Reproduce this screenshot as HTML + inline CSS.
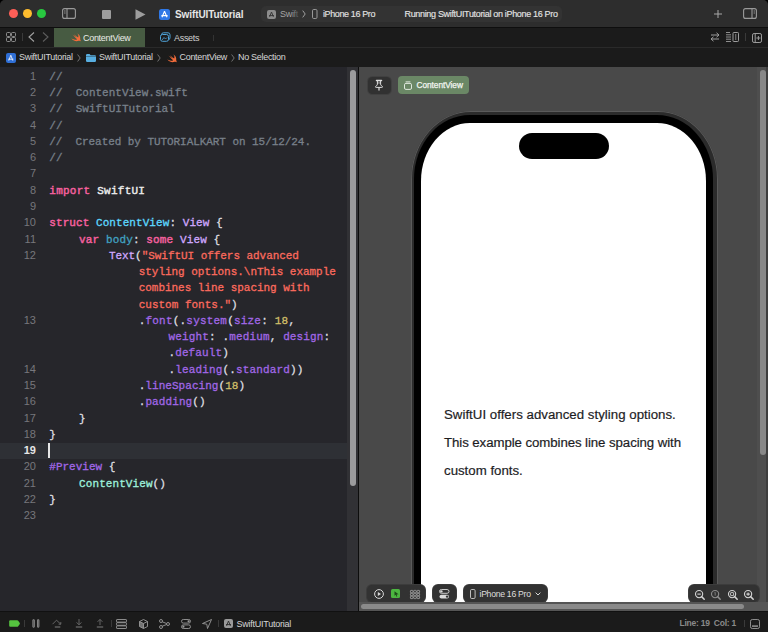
<!DOCTYPE html>
<html><head><meta charset="utf-8">
<style>
*{margin:0;padding:0;box-sizing:border-box}
html,body{width:768px;height:632px;overflow:hidden;background:#000}
body{position:relative;font-family:"Liberation Sans",sans-serif;}
.a{position:absolute}
svg{position:absolute;overflow:visible}
#win{position:absolute;left:0;top:0;width:768px;height:632px;background:#1c1c1c;border-radius:5px 5px 0 0;overflow:hidden}
#title{left:0;top:0;width:768px;height:28px;background:#2d2d2d;border-bottom:1px solid #0e0e0e}
#tabs{left:0;top:28px;width:768px;height:19px;background:#1b1b1b}
#crumb{left:0;top:47px;width:768px;height:19.5px;background:#1b1b1b;border-top:1px solid #2a2a2a}
#editor{left:0;top:66.5px;width:347px;height:544px;background:#26262b;overflow:hidden}
#etrack{left:347px;top:66.5px;width:11px;height:544.5px;background:#313135}
#ethumb{left:350px;top:69.5px;width:6px;height:416px;background:#9b9b9d;border-radius:3px}
#divider{left:358px;top:67px;width:1px;height:544px;background:#0d0d0d}
#canvas{left:359px;top:67px;width:409px;height:544px;background:#494949;overflow:hidden}
#status{left:0;top:611px;width:768px;height:21px;background:#1b1b1b;border-top:1px solid #111}
.t{white-space:pre;color:#d9d9d9;font-size:9px;letter-spacing:-0.3px;line-height:12px}
.code{position:absolute;left:0;white-space:pre;font-family:"Liberation Mono",monospace;font-size:11px;line-height:16.28px;color:#dfdfe0;height:16.28px;-webkit-text-stroke-width:0.3px}
.ln{position:absolute;left:0;width:36px;text-align:right;font-family:"Liberation Sans",sans-serif;font-size:11px;line-height:16.28px;color:#77777c}
.c{color:#78808a}.k{color:#f5609f;-webkit-text-stroke-width:0.45px}.s{color:#fc6a5d}.n{color:#d0bf69}
.td{color:#5dd8ff}.od{color:#41a1c0}.st{color:#d0a8ff}.sf{color:#a167e6}.pc{color:#9ef1dd}.b{-webkit-text-stroke-width:0.4px;color:#ececec}
</style></head><body>
<div id="win">
  <div id="title" class="a">
    <div class="a" style="left:9px;top:9px;width:9px;height:9px;border-radius:50%;background:#fe5f57"></div>
    <div class="a" style="left:23px;top:9px;width:9px;height:9px;border-radius:50%;background:#febc2e"></div>
    <div class="a" style="left:37px;top:9px;width:9px;height:9px;border-radius:50%;background:#28c840"></div>
    <svg style="left:62px;top:8px" width="14" height="11" viewBox="0 0 14 11"><rect x="0.6" y="0.6" width="12.8" height="9.8" rx="2" fill="none" stroke="#9a9a9a" stroke-width="1.1"/><line x1="5" y1="0.6" x2="5" y2="10.4" stroke="#9a9a9a" stroke-width="1.1"/><line x1="2" y1="3" x2="3.6" y2="3" stroke="#9a9a9a" stroke-width="0.9"/><line x1="2" y1="5" x2="3.6" y2="5" stroke="#9a9a9a" stroke-width="0.9"/></svg>
    <div class="a" style="left:102px;top:10px;width:8.5px;height:8.5px;border-radius:1px;background:#9d9d9d"></div>
    <svg style="left:134.5px;top:8.5px" width="11" height="11" viewBox="0 0 11 11"><path d="M0.5 0.3 L10.5 5.5 L0.5 10.7 Z" fill="#9d9d9d"/></svg>
    <div class="a" style="left:159px;top:8.5px;width:11px;height:11px;border-radius:2.5px;background:#2f78e6"></div>
    <svg style="left:159px;top:8.5px" width="11" height="11" viewBox="0 0 11 11"><path d="M5.5 2.2 L3 8.3 M5.5 2.2 L8 8.3 M2.4 6.6 L8.6 6.6" stroke="#fff" stroke-width="1.1" fill="none"/></svg>
    <div class="a t" style="left:175px;top:8.5px;font-size:10px;font-weight:bold;letter-spacing:-0.1px;color:#e6e6e6">SwiftUITutorial</div>
    <div class="a" style="left:261px;top:6px;width:301px;height:16px;border-radius:5px;background:#333333"></div>
    <div class="a" style="left:267px;top:10px;width:9px;height:8.5px;border-radius:2px;background:#8c8c8c"></div>
    <svg style="left:267px;top:10px" width="9" height="9" viewBox="0 0 9 9"><path d="M4.5 2 L2.6 6.8 M4.5 2 L6.4 6.8 M2 5.6 L7 5.6" stroke="#333" stroke-width="0.9" fill="none"/></svg>
    <div class="a t" style="left:280px;top:8px;color:#a5a5a5">Swift</div>
    <div class="a" style="left:291px;top:8px;width:9px;height:12px;background:linear-gradient(to right,rgba(51,51,51,0),rgba(51,51,51,0.9))"></div>
    <svg style="left:302px;top:10px" width="4" height="8" viewBox="0 0 4 8"><path d="M0.7 0.6 L3.2 4 L0.7 7.4" fill="none" stroke="#a0a0a0" stroke-width="1"/></svg>
    <svg style="left:312px;top:9px" width="6" height="10" viewBox="0 0 6 10"><rect x="0.5" y="0.5" width="4.5" height="9" rx="1.2" fill="none" stroke="#a5a5a5" stroke-width="0.9"/></svg>
    <div class="a t" style="left:323px;top:8px;color:#e0e0e0;letter-spacing:-0.38px;-webkit-text-stroke-width:0.15px">iPhone 16 Pro</div>
    <div class="a t" style="left:404.5px;top:8px;color:#e2e2e2;letter-spacing:-0.33px;-webkit-text-stroke-width:0.15px">Running SwiftUITutorial on iPhone 16 Pro</div>
    <svg style="left:713.5px;top:9.5px" width="8" height="8" viewBox="0 0 8 8"><path d="M4 0 V8 M0 4 H8" stroke="#a8a8a8" stroke-width="1"/></svg>
    <svg style="left:743px;top:8px" width="14" height="11" viewBox="0 0 14 11"><rect x="0.6" y="0.6" width="12.8" height="9.8" rx="2" fill="none" stroke="#9a9a9a" stroke-width="1.1"/><line x1="9" y1="0.6" x2="9" y2="10.4" stroke="#9a9a9a" stroke-width="1.1"/><line x1="10.6" y1="3" x2="12" y2="3" stroke="#9a9a9a" stroke-width="0.9"/><line x1="10.6" y1="5" x2="12" y2="5" stroke="#9a9a9a" stroke-width="0.9"/></svg>
  </div>
  <div id="tabs" class="a">
    <svg style="left:6px;top:4px" width="10" height="10" viewBox="0 0 10 10"><rect x="0.5" y="0.5" width="4" height="4" rx="1" fill="none" stroke="#9a9a9a" stroke-width="0.9"/><rect x="5.5" y="0.5" width="4" height="4" rx="1" fill="none" stroke="#9a9a9a" stroke-width="0.9"/><rect x="0.5" y="5.5" width="4" height="4" rx="1" fill="none" stroke="#9a9a9a" stroke-width="0.9"/><rect x="5.5" y="5.5" width="4" height="4" rx="1" fill="none" stroke="#9a9a9a" stroke-width="0.9"/></svg>
    <div class="a" style="left:22px;top:5px;width:1px;height:8px;background:#3a3a3a"></div>
    <svg style="left:28px;top:4px" width="7" height="10" viewBox="0 0 7 10"><path d="M6 0.5 L1 5 L6 9.5" fill="none" stroke="#a0a0a0" stroke-width="1.1"/></svg>
    <svg style="left:42px;top:4px" width="7" height="10" viewBox="0 0 7 10"><path d="M1 0.5 L6 5 L1 9.5" fill="none" stroke="#5c5c5c" stroke-width="1.1"/></svg>
    <div class="a" style="left:54px;top:0px;width:91px;height:18.5px;background:#475b42"></div>
    <svg style="left:71px;top:5px" width="10" height="9" viewBox="0 0 10 9"><path d="M6.2 0.3 C8.5 1.6 9.6 4 9.2 6.2 C9.7 7 9.8 7.8 9.6 8.3 C9 7.6 8.3 7.5 7.6 7.8 C5.8 8.8 2.8 8.4 0.3 5.6 C2.6 6.9 4.8 7 6.2 6.2 C4.6 5.1 2.8 3.2 1.6 1.6 C3 2.8 4.6 4 5.6 4.6 C4.6 3.5 3.6 2.2 2.9 1.2 C4.4 2.6 6.3 4 7.2 4.5 C7.7 3.2 7.3 1.6 6.2 0.3 Z" fill="#f26b3a"/></svg>
    <div class="a t" style="left:83px;top:3.5px;color:#e8ece6">ContentView</div>
    <svg style="left:160px;top:4px" width="11" height="10" viewBox="0 0 11 10"><rect x="1.5" y="0.8" width="8.5" height="7" rx="2" fill="none" stroke="#4fa3d8" stroke-width="1"/><rect x="0.5" y="2.5" width="8" height="6.8" rx="2" fill="#1d1d1d" stroke="#4fa3d8" stroke-width="1"/><path d="M2 8 L4 5.5 L5.5 7 L7 5.5" fill="none" stroke="#4fa3d8" stroke-width="0.8"/></svg>
    <div class="a t" style="left:174px;top:3.5px;color:#cfcfcf">Assets</div>
    <div class="a" style="left:213px;top:7px;width:1px;height:6px;background:#333"></div>
    <svg style="left:709.5px;top:4px" width="10" height="10" viewBox="0 0 10 10"><path d="M1 3 H9 M6.5 0.8 L9 3 L6.5 5.2 M9 7 H1 M3.5 4.8 L1 7 L3.5 9.2" fill="none" stroke="#9d9d9d" stroke-width="1"/></svg>
    <svg style="left:726px;top:4px" width="14" height="10" viewBox="0 0 14 10"><path d="M0 0.5 H4 M0 2.8 H5 M0 5 H5 M0 7.2 H5 M0 9.5 H5" stroke="#9d9d9d" stroke-width="0.9"/><rect x="7" y="0.5" width="5.5" height="9" rx="0.8" fill="none" stroke="#9d9d9d" stroke-width="1"/><line x1="9.75" y1="2" x2="9.75" y2="8" stroke="#9d9d9d" stroke-width="0.8"/></svg>
    <div class="a" style="left:745px;top:5px;width:1px;height:8px;background:#3a3a3a"></div>
    <svg style="left:752px;top:4.5px" width="10" height="10" viewBox="0 0 10 10"><rect x="0.5" y="0.5" width="9" height="9" rx="1.6" fill="none" stroke="#9d9d9d" stroke-width="1"/><line x1="3.2" y1="0.5" x2="3.2" y2="9.5" stroke="#9d9d9d" stroke-width="1"/><path d="M6.4 3 V7 M4.4 5 H8.4" stroke="#9d9d9d" stroke-width="1"/></svg>
  </div>
  <div id="crumb" class="a">
    <div class="a" style="left:6px;top:5px;width:9.5px;height:9.5px;border-radius:2px;background:#2f6fd6"></div>
    <svg style="left:6px;top:5px" width="10" height="10" viewBox="0 0 10 10"><path d="M4.8 2.2 L2.8 7.6 M4.8 2.2 L6.8 7.6 M2.2 6.2 L7.4 6.2" stroke="#dfe8f8" stroke-width="1" fill="none"/></svg>
    <div class="a t" style="left:19px;top:3px;color:#d6d6d6">SwiftUITutorial</div>
    <svg style="left:77px;top:6px" width="4" height="8" viewBox="0 0 4 8"><path d="M0.6 0.5 L3.2 4 L0.6 7.5" fill="none" stroke="#7a7a7a" stroke-width="0.9"/></svg>
    <svg style="left:86px;top:6px" width="10" height="8" viewBox="0 0 10 8"><path d="M0 1.2 Q0 0 1.2 0 H3.6 L4.6 1.2 H8.8 Q10 1.2 10 2.4 V6.8 Q10 8 8.8 8 H1.2 Q0 8 0 6.8 Z" fill="#58aee0"/><rect x="0" y="2.2" width="10" height="0.8" fill="#1d1d1d" opacity="0.45"/></svg>
    <div class="a t" style="left:99px;top:3px;color:#d6d6d6">SwiftUITutorial</div>
    <svg style="left:157px;top:6px" width="4" height="8" viewBox="0 0 4 8"><path d="M0.6 0.5 L3.2 4 L0.6 7.5" fill="none" stroke="#7a7a7a" stroke-width="0.9"/></svg>
    <svg style="left:166.5px;top:5.5px" width="10" height="9" viewBox="0 0 10 9"><path d="M6.2 0.3 C8.5 1.6 9.6 4 9.2 6.2 C9.7 7 9.8 7.8 9.6 8.3 C9 7.6 8.3 7.5 7.6 7.8 C5.8 8.8 2.8 8.4 0.3 5.6 C2.6 6.9 4.8 7 6.2 6.2 C4.6 5.1 2.8 3.2 1.6 1.6 C3 2.8 4.6 4 5.6 4.6 C4.6 3.5 3.6 2.2 2.9 1.2 C4.4 2.6 6.3 4 7.2 4.5 C7.7 3.2 7.3 1.6 6.2 0.3 Z" fill="#f26b3a"/></svg>
    <div class="a t" style="left:179.5px;top:3px;color:#d6d6d6">ContentView</div>
    <svg style="left:230.5px;top:6px" width="4" height="8" viewBox="0 0 4 8"><path d="M0.6 0.5 L3.2 4 L0.6 7.5" fill="none" stroke="#7a7a7a" stroke-width="0.9"/></svg>
    <div class="a t" style="left:238px;top:3px;color:#d6d6d6">No Selection</div>
  </div>
  <div id="editor" class="a">
<div class="a" style="left:0;top:376.20px;width:347px;height:16.1px;background:#2e3035"></div>
<div class="ln" style="top:1.20px">1</div>
<div class="code" style="left:49.3px;top:2.20px"><span class="c">//</span></div>
<div class="ln" style="top:17.48px">2</div>
<div class="code" style="left:49.3px;top:18.48px"><span class="c">//  ContentView.swift</span></div>
<div class="ln" style="top:33.76px">3</div>
<div class="code" style="left:49.3px;top:34.76px"><span class="c">//  SwiftUITutorial</span></div>
<div class="ln" style="top:50.04px">4</div>
<div class="code" style="left:49.3px;top:51.04px"><span class="c">//</span></div>
<div class="ln" style="top:66.32px">5</div>
<div class="code" style="left:49.3px;top:67.32px;letter-spacing:-0.06px"><span class="c">//  Created by TUTORIALKART on 15/12/24.</span></div>
<div class="ln" style="top:82.60px">6</div>
<div class="code" style="left:49.3px;top:83.60px"><span class="c">//</span></div>
<div class="ln" style="top:98.88px">7</div>
<div class="ln" style="top:115.16px">8</div>
<div class="code" style="left:49.3px;top:116.16px;letter-spacing:0.25px"><span class="k">import</span> <span class="b">SwiftUI</span></div>
<div class="ln" style="top:131.44px">9</div>
<div class="ln" style="top:147.72px">10</div>
<div class="code" style="left:49.3px;top:148.72px;letter-spacing:0.07px"><span class="k">struct</span> <span class="td">ContentView</span>: <span class="st">View</span> {</div>
<div class="ln" style="top:164.00px">11</div>
<div class="code" style="left:79.1px;top:165.00px;letter-spacing:0.12px"><span class="k">var</span> <span class="od">body</span>: <span class="k">some</span> <span class="st">View</span> {</div>
<div class="ln" style="top:180.28px">12</div>
<div class="code" style="left:108.9px;top:181.28px;letter-spacing:-0.05px"><span class="st">Text</span>(<span class="s">"SwiftUI offers advanced</span></div>
<div class="code" style="left:138.7px;top:197.56px;letter-spacing:-0.03px"><span class="s">styling options.\nThis example</span></div>
<div class="code" style="left:138.7px;top:213.84px;letter-spacing:-0.03px"><span class="s">combines line spacing with</span></div>
<div class="code" style="left:138.7px;top:230.12px"><span class="s">custom fonts."</span>)</div>
<div class="ln" style="top:245.40px">13</div>
<div class="code" style="left:138.7px;top:246.40px;letter-spacing:0.20px">.<span class="sf">font</span>(.<span class="sf">system</span>(<span class="sf">size</span>: <span class="n">18</span>,</div>
<div class="code" style="left:168.5px;top:262.68px;letter-spacing:0.14px"><span class="sf">weight</span>: .<span class="sf">medium</span>, <span class="sf">design</span>:</div>
<div class="code" style="left:168.5px;top:278.96px;letter-spacing:0.10px">.<span class="sf">default</span>)</div>
<div class="ln" style="top:294.24px">14</div>
<div class="code" style="left:168.5px;top:295.24px;letter-spacing:0.15px">.<span class="sf">leading</span>(.<span class="sf">standard</span>))</div>
<div class="ln" style="top:310.52px">15</div>
<div class="code" style="left:138.7px;top:311.52px;letter-spacing:0.05px">.<span class="sf">lineSpacing</span>(<span class="n">18</span>)</div>
<div class="ln" style="top:326.80px">16</div>
<div class="code" style="left:138.7px;top:327.80px;letter-spacing:0.10px">.<span class="sf">padding</span>()</div>
<div class="ln" style="top:343.08px">17</div>
<div class="code" style="left:79.1px;top:344.08px">}</div>
<div class="ln" style="top:359.36px">18</div>
<div class="code" style="left:49.3px;top:360.36px">}</div>
<div class="ln" style="top:375.64px;color:#e6e6e6;font-weight:bold">19</div>
<div class="ln" style="top:391.92px">20</div>
<div class="code" style="left:49.3px;top:392.92px"><span class="sf">#Preview</span> {</div>
<div class="ln" style="top:408.20px">21</div>
<div class="code" style="left:79.1px;top:409.20px;letter-spacing:0.08px"><span class="pc">ContentView</span>()</div>
<div class="ln" style="top:424.48px">22</div>
<div class="code" style="left:49.3px;top:425.48px">}</div>
<div class="ln" style="top:440.76px">23</div>
<div class="a" style="left:48px;top:376.90px;width:2px;height:14.5px;background:#e6e6e6"></div>

  </div>
  <div id="etrack" class="a"></div>
  <div id="ethumb" class="a"></div>
  <div id="divider" class="a"></div>
  <div id="canvas" class="a">
    <div class="a" style="left:51.5px;top:44px;width:307.2px;height:560px;border-radius:60px/68px;background:#2b2b2b;box-shadow:inset 0 0 0 1px #5a5a5a"></div>
    <div class="a" style="left:55.2px;top:47.8px;width:299px;height:560px;border-radius:56px/64px;background:#000"></div>
    <div class="a" style="left:62px;top:55.7px;width:285.3px;height:560px;border-radius:49px/58px;background:#fff"></div>
    <div class="a" style="left:160.3px;top:65.6px;width:89.3px;height:26.1px;border-radius:13px;background:#000"></div>
    <div class="a" style="left:85px;top:0;white-space:pre;font-size:13.25px;line-height:28px;color:#1d1d1f;top:333.8px;-webkit-text-stroke-width:0.2px"><span style="letter-spacing:0.02px">SwiftUI offers advanced styling options.</span><br><span style="letter-spacing:-0.08px">This example combines line spacing with</span><br>custom fonts.</div>
    <div class="a" style="left:9px;top:9.5px;width:22.5px;height:17px;border-radius:4.5px;background:#313131;box-shadow:0 0 0 1px #404040"></div>
    <svg style="left:15px;top:12px" width="10" height="12" viewBox="0 0 10 12"><path d="M2.5 1.5 H7.5" stroke="#e0e0e0" stroke-width="1.5" stroke-linecap="round"/><path d="M3.4 2 V5.2 Q3.4 6 2.4 6.8 L1.7 7.5 Q1.2 8.4 2.2 8.4 H7.8 Q8.8 8.4 8.3 7.5 L7.6 6.8 Q6.6 6 6.6 5.2 V2" fill="none" stroke="#e0e0e0" stroke-width="1"/><path d="M5 2.8 V4.8" stroke="#e0e0e0" stroke-width="0.8"/><path d="M5 8.4 V11.6" stroke="#e0e0e0" stroke-width="1.2"/></svg>
    <div class="a" style="left:39px;top:9px;width:71.4px;height:18.2px;border-radius:4px;background:#6b8866"></div>
    <svg style="left:45px;top:14px" width="9" height="9" viewBox="0 0 9 9"><rect x="0.5" y="2.4" width="7" height="6" rx="1.4" fill="none" stroke="#e6ede4" stroke-width="0.95"/><path d="M2 0.9 H6" stroke="#e6ede4" stroke-width="0.95" stroke-linecap="round"/></svg>
    <div class="a t" style="left:57.5px;top:11.5px;font-size:8.3px;letter-spacing:-0.05px;color:#f2f5f0;-webkit-text-stroke-width:0.25px">ContentView</div>
    <div class="a" style="left:398px;top:0;width:11px;height:535px;background:#4e4e4e"></div>
    <div class="a" style="left:401px;top:3px;width:6px;height:384.5px;border-radius:3px;background:#888"></div>
    <div class="a" style="left:406.5px;top:0;width:2.5px;height:544px;background:#3e3e3e"></div>
    <div class="a" style="left:8.2px;top:517.5px;width:57.8px;height:17.5px;border-radius:5px;background:#323232;box-shadow:0 0 0 1px #3c3c3c"></div>
    <svg style="left:14.7px;top:522px" width="10" height="10" viewBox="0 0 10 10"><circle cx="5" cy="5" r="4.4" fill="none" stroke="#d9d9d9" stroke-width="1"/><path d="M3.8 3 L7 5 L3.8 7 Z" fill="#d9d9d9"/></svg>
    <div class="a" style="left:32.2px;top:522px;width:9.1px;height:9.3px;border-radius:1.5px;background:#4cb640"></div>
    <svg style="left:34.5px;top:523.5px" width="5" height="6" viewBox="0 0 5 6"><path d="M0.5 0.3 L4.5 3.3 L2.6 3.5 L3.3 5.6 L2.5 5.8 L1.8 3.8 L0.5 4.8 Z" fill="#1d4a18"/></svg>
    <svg style="left:51.2px;top:522.5px" width="10" height="9" viewBox="0 0 10 9"><g fill="none" stroke="#a8a8a8" stroke-width="0.8"><rect x="0.4" y="0.4" width="2.6" height="2.4" rx="0.6"/><rect x="3.7" y="0.4" width="2.6" height="2.4" rx="0.6"/><rect x="7" y="0.4" width="2.6" height="2.4" rx="0.6"/><rect x="0.4" y="3.3" width="2.6" height="2.4" rx="0.6"/><rect x="3.7" y="3.3" width="2.6" height="2.4" rx="0.6"/><rect x="7" y="3.3" width="2.6" height="2.4" rx="0.6"/><rect x="0.4" y="6.2" width="2.6" height="2.4" rx="0.6"/><rect x="3.7" y="6.2" width="2.6" height="2.4" rx="0.6"/><rect x="7" y="6.2" width="2.6" height="2.4" rx="0.6"/></g></svg>
    <div class="a" style="left:73.8px;top:517.5px;width:23px;height:17.5px;border-radius:5px;background:#323232;box-shadow:0 0 0 1px #3c3c3c"></div>
    <svg style="left:79.8px;top:521.5px" width="11" height="10" viewBox="0 0 11 10"><rect x="0.5" y="0.5" width="9.5" height="3.8" rx="1.9" fill="none" stroke="#d9d9d9" stroke-width="0.9"/><rect x="0.5" y="5.7" width="9.5" height="3.8" rx="1.9" fill="#d9d9d9"/><circle cx="2.4" cy="2.4" r="1.2" fill="#d9d9d9"/><circle cx="8.1" cy="7.6" r="1.2" fill="#323232"/></svg>
    <div class="a" style="left:104.6px;top:517.5px;width:83.3px;height:17.5px;border-radius:5px;background:#323232;box-shadow:0 0 0 1px #3c3c3c"></div>
    <svg style="left:111px;top:521.5px" width="6" height="10" viewBox="0 0 6 10"><rect x="0.5" y="0.5" width="4.6" height="9" rx="1.2" fill="none" stroke="#cfcfcf" stroke-width="0.9"/></svg>
    <div class="a t" style="left:120.5px;top:520.5px;font-size:8.7px;letter-spacing:-0.3px;color:#dedede">iPhone 16 Pro</div>
    <svg style="left:176px;top:524.5px" width="6" height="4" viewBox="0 0 6 4"><path d="M0.6 0.6 L3 3 L5.4 0.6" fill="none" stroke="#d9d9d9" stroke-width="1"/></svg>
    <div class="a" style="left:329.9px;top:518.1px;width:70.1px;height:16.7px;border-radius:5px;background:#323232;box-shadow:0 0 0 1px #3c3c3c"></div>
    <svg style="left:335.7px;top:522.5px" width="10" height="10" viewBox="0 0 10 10"><circle cx="4.1" cy="4.1" r="3.6" fill="none" stroke="#d4d4d4" stroke-width="1.1"/><path d="M6.6 6.6 L9.2 9.2" stroke="#d4d4d4" stroke-width="1.5" stroke-linecap="round"/><path d="M2.4 4.1 H5.8" stroke="#d4d4d4" stroke-width="1.1"/></svg>
    <svg style="left:352px;top:522.5px" width="10" height="10" viewBox="0 0 10 10"><circle cx="4.1" cy="4.1" r="3.6" fill="none" stroke="#8e8e8e" stroke-width="1.1"/><path d="M6.6 6.6 L9.2 9.2" stroke="#8e8e8e" stroke-width="1.5" stroke-linecap="round"/><path d="M3.6 2.6 L4.2 2.3 V5.6" fill="none" stroke="#8e8e8e" stroke-width="0.8"/></svg>
    <svg style="left:368.5px;top:522.5px" width="10" height="10" viewBox="0 0 10 10"><circle cx="4.1" cy="4.1" r="3.6" fill="none" stroke="#d4d4d4" stroke-width="1.1"/><path d="M6.6 6.6 L9.2 9.2" stroke="#d4d4d4" stroke-width="1.5" stroke-linecap="round"/><rect x="2.6" y="2.6" width="3" height="3" rx="0.5" fill="none" stroke="#d4d4d4" stroke-width="0.9"/></svg>
    <svg style="left:384.6px;top:522.5px" width="10" height="10" viewBox="0 0 10 10"><circle cx="4.1" cy="4.1" r="3.6" fill="none" stroke="#d4d4d4" stroke-width="1.1"/><path d="M6.6 6.6 L9.2 9.2" stroke="#d4d4d4" stroke-width="1.5" stroke-linecap="round"/><path d="M2.4 4.1 H5.8 M4.1 2.4 V5.8" stroke="#d4d4d4" stroke-width="1.1"/></svg>
    <div class="a" style="left:0;top:534.5px;width:409px;height:9.5px;background:#555"></div>
    <div class="a" style="left:2px;top:536.8px;width:383px;height:5.4px;border-radius:2.7px;background:#8a8a8a"></div>
  </div>
  <div id="status" class="a">
    <svg style="left:8.5px;top:8.3px" width="11" height="7" viewBox="0 0 11 7"><path d="M1.2 0.2 H8.2 Q8.8 0.2 9.2 0.7 L10.8 3.1 Q11 3.5 10.8 3.9 L9.2 6.3 Q8.8 6.8 8.2 6.8 H1.2 Q0.2 6.8 0.2 5.8 V1.2 Q0.2 0.2 1.2 0.2 Z" fill="#55c33f"/></svg>
    <div class="a" style="left:24px;top:8px;width:1px;height:7px;background:#3a3a3a"></div>
    <svg style="left:32px;top:7px" width="8" height="9" viewBox="0 0 8 9"><rect x="0.4" y="0.3" width="2.4" height="8.4" rx="1.1" fill="#8e8e8e"/><rect x="5" y="0.3" width="2.4" height="8.4" rx="1.1" fill="#8e8e8e"/><rect x="1.2" y="1.2" width="0.8" height="6.6" fill="#5a5a5a"/><rect x="5.8" y="1.2" width="0.8" height="6.6" fill="#5a5a5a"/></svg>
    <svg style="left:52px;top:7px" width="11" height="9" viewBox="0 0 11 9"><path d="M0.5 5.2 L4.5 1.2 L8.8 5.2 M8.8 5.2 V3 M8.8 5.2 H6.6" fill="none" stroke="#6e6e6e" stroke-width="0.9"/><rect x="2.8" y="7.4" width="5.5" height="1.2" fill="#6e6e6e"/></svg>
    <svg style="left:75px;top:7px" width="8" height="9" viewBox="0 0 8 9"><path d="M4 0 V5.6 M1.6 3.4 L4 5.8 L6.4 3.4" fill="none" stroke="#6e6e6e" stroke-width="0.9"/><rect x="0.8" y="7.4" width="6.4" height="1.2" fill="#6e6e6e"/></svg>
    <svg style="left:96px;top:7px" width="8" height="9" viewBox="0 0 8 9"><path d="M4 6 V0.6 M1.6 2.8 L4 0.4 L6.4 2.8" fill="none" stroke="#6e6e6e" stroke-width="0.9"/><rect x="0.8" y="7.4" width="6.4" height="1.2" fill="#6e6e6e"/></svg>
    <div class="a" style="left:110.5px;top:8px;width:1px;height:7px;background:#3a3a3a"></div>
    <svg style="left:116px;top:7px" width="11" height="10" viewBox="0 0 11 10"><rect x="0.5" y="0.5" width="10" height="2.6" rx="0.6" fill="none" stroke="#9a9a9a" stroke-width="0.9"/><rect x="0.5" y="3.7" width="10" height="2.6" rx="0.6" fill="none" stroke="#9a9a9a" stroke-width="0.9"/><rect x="0.5" y="6.9" width="10" height="2.6" rx="0.6" fill="none" stroke="#9a9a9a" stroke-width="0.9"/></svg>
    <svg style="left:138.5px;top:7px" width="9" height="10" viewBox="0 0 9 10"><path d="M4.5 0.5 L8.5 2.5 V7.5 L4.5 9.5 L0.5 7.5 V2.5 Z M0.5 2.5 L4.5 4.5 L8.5 2.5 M4.5 4.5 V9.5" fill="none" stroke="#9a9a9a" stroke-width="0.9"/><path d="M0.5 2.5 L4.5 4.5 V9.5 L0.5 7.5 Z" fill="#9a9a9a" opacity="0.7"/></svg>
    <svg style="left:159px;top:7px" width="11" height="10" viewBox="0 0 11 10"><circle cx="2" cy="2" r="1.5" fill="none" stroke="#9a9a9a" stroke-width="0.9"/><circle cx="2" cy="8" r="1.5" fill="none" stroke="#9a9a9a" stroke-width="0.9"/><circle cx="9" cy="5" r="1.5" fill="none" stroke="#9a9a9a" stroke-width="0.9"/><path d="M3.2 2.8 L7.6 4.5 M3.2 7.2 L7.6 5.5" stroke="#9a9a9a" stroke-width="0.9"/></svg>
    <svg style="left:180.5px;top:7px" width="10" height="10" viewBox="0 0 10 10"><rect x="0.5" y="0.5" width="9" height="3.6" rx="1.8" fill="none" stroke="#9a9a9a" stroke-width="0.9"/><rect x="0.5" y="5.9" width="9" height="3.6" rx="1.8" fill="none" stroke="#9a9a9a" stroke-width="0.9"/><circle cx="7.6" cy="2.3" r="1.1" fill="#9a9a9a"/><circle cx="2.4" cy="7.7" r="1.1" fill="#9a9a9a"/></svg>
    <svg style="left:202px;top:7px" width="10" height="10" viewBox="0 0 10 10"><path d="M9.5 0.5 L0.5 4.5 L4.8 5.2 L5.5 9.5 Z" fill="none" stroke="#9a9a9a" stroke-width="0.9" stroke-linejoin="round"/></svg>
    <div class="a" style="left:217.5px;top:8px;width:1px;height:7px;background:#3a3a3a"></div>
    <div class="a" style="left:224px;top:7.4px;width:9px;height:9px;border-radius:2px;background:#9a9a9a"></div>
    <svg style="left:224px;top:7.4px" width="9" height="9" viewBox="0 0 9 9"><path d="M4.5 2 L2.6 6.8 M4.5 2 L6.4 6.8 M2 5.6 L7 5.6" stroke="#2a2a2a" stroke-width="0.9" fill="none"/></svg>
    <div class="a t" style="left:236.5px;top:6px;color:#d6d6d6;letter-spacing:-0.25px">SwiftUITutorial</div>
    <div class="a t" style="left:679.5px;top:5px;font-size:8.5px;font-weight:bold;letter-spacing:-0.25px;color:#8a8a8a">Line: 19  Col: 1</div>
    <div class="a" style="left:743.5px;top:8px;width:1px;height:7px;background:#3a3a3a"></div>
    <svg style="left:750px;top:7px" width="10" height="10" viewBox="0 0 10 10"><rect x="0.5" y="0.5" width="9" height="9" rx="1.8" fill="none" stroke="#9a9a9a" stroke-width="0.9"/><rect x="2" y="6.4" width="6" height="1.4" fill="#9a9a9a"/></svg>
  </div>
</div>
</body></html>
